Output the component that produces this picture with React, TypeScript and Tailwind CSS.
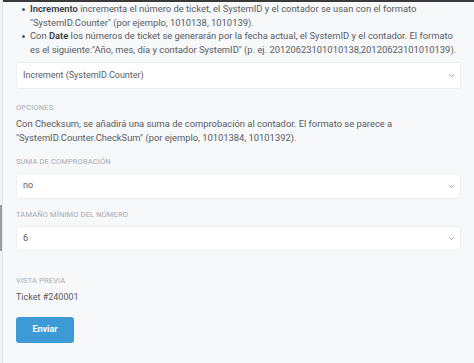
import { ChevronDown } from 'lucide-react';

function Select({ value, h }: { value: string; h: string }) {
  return (
    <div className={`flex ${h} items-center justify-between rounded-[3px] border border-[#edeff1] bg-white pl-[6px] pr-[4px] text-[9px] text-[#585b5f]`}>
      <span>{value}</span>
      <ChevronDown size={9} strokeWidth={2} className="text-[#7d8287]" />
    </div>
  );
}

function Label({ children }: { children: React.ReactNode }) {
  return <p className="text-[7.5px] leading-[12px] uppercase tracking-[0.02em] text-[#a7abaf]">{children}</p>;
}

export default function App() {
  return (
    <div
      className="relative h-[363px] w-[474px] overflow-hidden bg-[#f7f8fa] text-[9.4px] text-[#585b5f]"
      style={{ fontFamily: 'Roboto, "Open Sans", sans-serif' }}
    >
      {/* top edge + left rail */}
      <div className="absolute left-0 right-0 top-0 h-[2px] bg-[#3a3a3a]" />
      <div className="absolute bottom-0 left-0 top-0 w-[3px] border-r border-[#e4e6e8] bg-[#f2f3f5]" />
      <div className="absolute left-0 top-[205px] h-[46px] w-[2px] bg-[#9a9da1]" />

      <div className="pl-[16px] pr-[13px] pt-[2px]">
        <ul className="pl-[14px] leading-[13.5px]">
          <li className="relative">
            <span className="absolute -left-[8px] top-[6px] h-[2.5px] w-[2.5px] rounded-full bg-[#585b5f]" />
            <b className="font-semibold text-[#3a3d40]">Incremento</b> incrementa el número de ticket, el SystemID y el contador se usan con el formato "SystemID.Counter" (por ejemplo, 1010138, 1010139).
          </li>
          <li className="relative">
            <span className="absolute -left-[8px] top-[6px] h-[2.5px] w-[2.5px] rounded-full bg-[#585b5f]" />
            Con <b className="font-semibold text-[#3a3d40]">Date</b> los números de ticket se generarán por la fecha actual, el SystemID y el contador. El formato es el siguiente:"Año, mes, día y contador SystemID" (p. ej. 20120623101010138,20120623101010139).
          </li>
        </ul>

        <div className="mt-[6px]">
          <Select value="Increment (SystemID.Counter)" h="h-[27px]" />
        </div>

        <div className="mt-[13px]">
          <Label>Opciones</Label>
          <p className="mt-[3px] leading-[14px]">
            Con Checksum, se añadirá una suma de comprobación al contador. El formato se parece a "SystemID.Counter.CheckSum" (por ejemplo, 10101384, 10101392).
          </p>
        </div>

        <div className="mt-[11px]">
          <Label>Suma de comprobación</Label>
          <div className="mt-[5px]">
            <Select value="no" h="h-[26px]" />
          </div>
        </div>

        <div className="mt-[10px]">
          <Label>Tamaño mínimo del número</Label>
          <div className="mt-[5px]">
            <Select value="6" h="h-[25px]" />
          </div>
        </div>

        <div className="mt-[24px]">
          <Label>Vista previa</Label>
          <p className="mt-[3px] text-[9px] leading-[14px]">Ticket #240001</p>
        </div>

        <button className="mt-[13px] h-[26px] w-[58px] rounded-[3px] bg-[#3e9ad5] text-[9px] font-bold text-white">
          Enviar
        </button>
      </div>
    </div>
  );
}
